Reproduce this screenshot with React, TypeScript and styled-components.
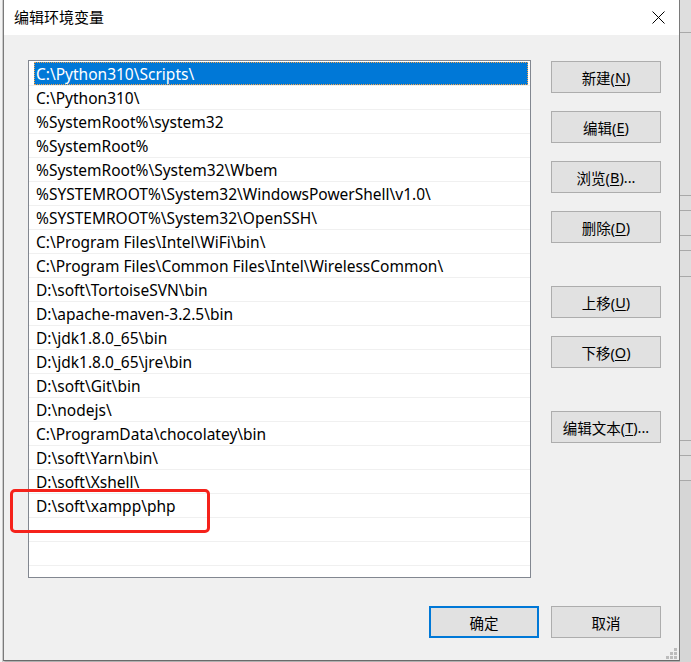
import React from "react";
import styled, { createGlobalStyle } from "styled-components";

const Global = createGlobalStyle`
  html, body { margin: 0; padding: 0; }
  body { width: 691px; height: 662px; overflow: hidden; background: #e6e6e6; }
  * { box-sizing: border-box; }
`;

const FONT = `"Noto Sans", "Noto Sans CJK SC", sans-serif`;

const Page = styled.div`
  position: relative;
  width: 691px;
  height: 662px;
  display: flex;
  font-family: ${FONT};
  color: #000;
`;

const BackLeft = styled.div`
  width: 3px;
  height: 100%;
  background: #f4f4f4;
  border-right: 1px solid #cfcfcf;
`;

const BackRight = styled.div`
  flex: 1;
  height: 100%;
  background: #d6d6d6;
  display: flex;
  flex-direction: column;
`;

const BackLine = styled.div<{ $h: number }>`
  height: ${(p) => p.$h}px;
  border-bottom: 1px solid #a9a9a9;
  background: #dedede;
`;

const Dialog = styled.div`
  width: 677px;
  height: 661px;
  display: flex;
  flex-direction: column;
  border-left: 1px solid #7a7a7a;
  border-right: 1px solid #7a7a7a;
  border-bottom: 1px solid #6a6a6a;
  box-shadow: 1px 1px 2px rgba(0, 0, 0, 0.35);
  background: #f0f0f0;
`;

const TitleBar = styled.div`
  height: 35px;
  background: #fff;
  display: flex;
  align-items: center;
  justify-content: space-between;
  padding: 0 14px 2px 10px;
  font-size: 15px;
`;

const CloseIcon = styled.svg`
  width: 13px;
  height: 13px;
  margin-top: 2px;
`;

const Body = styled.div`
  flex: 1;
  display: flex;
  flex-direction: column;
  padding: 25px 18px 20px 24px;
  position: relative;
`;

const Main = styled.div`
  display: flex;
  gap: 20px;
`;

const List = styled.div`
  width: 503px;
  height: 518px;
  background: #fff;
  border: 1px solid #828790;
  padding-top: 1px;
  display: flex;
  flex-direction: column;
`;

const Row = styled.div`
  height: 24px;
  flex: none;
  border-bottom: 1px solid #f0f0f0;
  display: flex;
  padding: 0 2px 0 5px;
`;

const Cell = styled.div<{ $selected?: boolean }>`
  flex: 1;
  height: 23px;
  padding-left: 2px;
  display: flex;
  align-items: center;
  font-size: 15.5px;
  white-space: nowrap;
  background: ${(p) => (p.$selected ? "#0078d7" : "transparent")};
  color: ${(p) => (p.$selected ? "#fff" : "#000")};
  outline: ${(p) => (p.$selected ? "1px dotted #f2a34b" : "none")};
  outline-offset: -1px;
`;

const ButtonCol = styled.div`
  width: 110px;
  display: flex;
  flex-direction: column;
  padding-top: 1px;
`;

const Btn = styled.button<{ $gap?: number; $primary?: boolean }>`
  width: 110px;
  height: 32px;
  flex: none;
  margin-top: ${(p) => p.$gap ?? 0}px;
  background: #e1e1e1;
  border: ${(p) => (p.$primary ? "2px solid #0078d7" : "1px solid #adadad")};
  font-family: ${FONT};
  font-size: 14.5px;
  color: #000;
  padding: 0;
  display: flex;
  align-items: center;
  justify-content: center;
  u { text-decoration: underline; text-underline-offset: 2px; }
`;

const Footer = styled.div`
  margin-top: 28px;
  display: flex;
  justify-content: flex-end;
  gap: 12px;
`;

const Grip = styled.svg`
  position: absolute;
  right: 2px;
  bottom: 1px;
  width: 11px;
  height: 11px;
`;

const Annotation = styled.div`
  position: absolute;
  left: 10px;
  top: 489px;
  width: 200px;
  height: 44px;
  border: 3px solid #f5221b;
  border-radius: 5px;
  pointer-events: none;
`;

const paths = [
  "C:\\Python310\\Scripts\\",
  "C:\\Python310\\",
  "%SystemRoot%\\system32",
  "%SystemRoot%",
  "%SystemRoot%\\System32\\Wbem",
  "%SYSTEMROOT%\\System32\\WindowsPowerShell\\v1.0\\",
  "%SYSTEMROOT%\\System32\\OpenSSH\\",
  "C:\\Program Files\\Intel\\WiFi\\bin\\",
  "C:\\Program Files\\Common Files\\Intel\\WirelessCommon\\",
  "D:\\soft\\TortoiseSVN\\bin",
  "D:\\apache-maven-3.2.5\\bin",
  "D:\\jdk1.8.0_65\\bin",
  "D:\\jdk1.8.0_65\\jre\\bin",
  "D:\\soft\\Git\\bin",
  "D:\\nodejs\\",
  "C:\\ProgramData\\chocolatey\\bin",
  "D:\\soft\\Yarn\\bin\\",
  "D:\\soft\\Xshell\\",
  "D:\\soft\\xampp\\php",
  "",
  "",
];

const sideButtons: { label: string; key: string; tail: string; gap: number }[] = [
  { label: "新建(", key: "N", tail: ")", gap: 0 },
  { label: "编辑(", key: "E", tail: ")", gap: 18 },
  { label: "浏览(", key: "B", tail: ")...", gap: 18 },
  { label: "删除(", key: "D", tail: ")", gap: 18 },
  { label: "上移(", key: "U", tail: ")", gap: 43 },
  { label: "下移(", key: "O", tail: ")", gap: 18 },
  { label: "编辑文本(", key: "T", tail: ")...", gap: 43 },
];

export default function App() {
  return (
    <Page>
      <Global />
      <BackLeft />
      <Dialog>
        <TitleBar>
          <span>编辑环境变量</span>
          <CloseIcon viewBox="0 0 13 13">
            <path d="M0.5 0.5 L12.5 12.5 M12.5 0.5 L0.5 12.5" stroke="#000" strokeWidth="1" fill="none" />
          </CloseIcon>
        </TitleBar>
        <Body>
          <Main>
            <List>
              {paths.map((p, i) => (
                <Row key={i}>
                  <Cell $selected={i === 0}>{p}</Cell>
                </Row>
              ))}
            </List>
            <ButtonCol>
              {sideButtons.map((b) => (
                <Btn key={b.key} $gap={b.gap}>
                  {b.label}
                  <u>{b.key}</u>
                  {b.tail}
                </Btn>
              ))}
            </ButtonCol>
          </Main>
          <Footer>
            <Btn $primary>确定</Btn>
            <Btn>取消</Btn>
          </Footer>
          <Grip viewBox="0 0 11 11">
            {[
              [8, 0],
              [4, 4],
              [8, 4],
              [0, 8],
              [4, 8],
              [8, 8],
            ].map(([x, y], i) => (
              <rect key={i} x={x} y={y} width="3" height="3" fill="#bcbcbc" />
            ))}
          </Grip>
        </Body>
      </Dialog>
      <BackRight>
        <BackLine $h={33} />
        <BackLine $h={163} />
        <BackLine $h={15} />
        <BackLine $h={25} />
        <BackLine $h={15} />
        <BackLine $h={26} />
        <BackLine $h={164} />
        <BackLine $h={15} />
        <BackLine $h={25} />
      </BackRight>
      <Annotation />
    </Page>
  );
}
